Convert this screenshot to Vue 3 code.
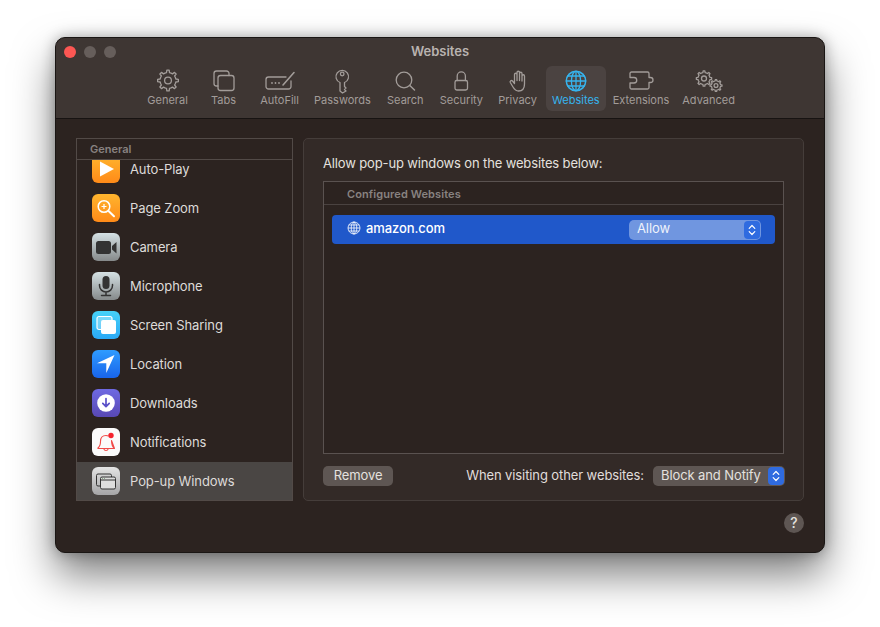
<script setup>
const gear = (cx, cy, ro, ri, teeth) => {
  const pts = [];
  const step = (Math.PI * 2) / teeth;
  for (let i = 0; i < teeth; i++) {
    const a = i * step - Math.PI / 2;
    [[-0.5, ri], [-0.24, ri], [-0.14, ro], [0.14, ro], [0.24, ri]].forEach(([o, r]) => {
      const t = a + o * step;
      pts.push((cx + r * Math.cos(t)).toFixed(2) + " " + (cy + r * Math.sin(t)).toFixed(2));
    });
  }
  return "M" + pts.join("L") + "Z";
};

const tabs = [
  { id: "general", label: "General" },
  { id: "tabs", label: "Tabs" },
  { id: "autofill", label: "AutoFill" },
  { id: "passwords", label: "Passwords" },
  { id: "search", label: "Search" },
  { id: "security", label: "Security" },
  { id: "privacy", label: "Privacy" },
  { id: "websites", label: "Websites", active: true },
  { id: "extensions", label: "Extensions" },
  { id: "advanced", label: "Advanced" },
];

const sites = [
  { id: "autoplay", label: "Auto-Play" },
  { id: "zoom", label: "Page Zoom" },
  { id: "camera", label: "Camera" },
  { id: "mic", label: "Microphone" },
  { id: "screen", label: "Screen Sharing" },
  { id: "location", label: "Location" },
  { id: "downloads", label: "Downloads" },
  { id: "notifications", label: "Notifications" },
  { id: "popup", label: "Pop-up Windows", active: true },
];
</script>

<template>
  <div class="page">
    <div class="window">
      <header class="toolbar">
        <div class="titlebar">
          <div class="lights">
            <span class="light red"></span>
            <span class="light"></span>
            <span class="light"></span>
          </div>
          <div class="title">Websites</div>
          <div></div>
        </div>
        <nav class="tabs">
          <div v-for="t in tabs" :key="t.id" class="tab" :class="{ active: t.active }">
            <svg class="tab-icon" viewBox="0 0 32 26" fill="none" stroke="currentColor" stroke-width="1.3" stroke-linejoin="round" stroke-linecap="round">
              <template v-if="t.id === 'general'">
                <path :d="gear(16, 12.5, 10.4, 8, 8)" />
                <circle cx="16" cy="12.5" r="3.4" />
              </template>
              <template v-else-if="t.id === 'tabs'">
                <path d="M10 18H8.5A2.5 2.5 0 0 1 6 15.500V5.500A2.500 2.500 0 0 1 8.500 3H18.500A2.500 2.500 0 0 1 21 5.500V7.500" />
                <rect x="10" y="7.500" width="16" height="15" rx="2.500" />
              </template>
              <template v-else-if="t.id === 'autofill'">
                <path d="M22 9H4.500A2.500 2.500 0 0 0 2 11.500V18.500A2.500 2.500 0 0 0 4.500 21H24.500A2.500 2.500 0 0 0 27 18.500V13" />
                <path d="M19 17L30 4.500" stroke-width="1.600" />
                <circle cx="8" cy="15" r=".9" fill="currentColor" stroke="none" />
                <circle cx="11.500" cy="15" r=".9" fill="currentColor" stroke="none" />
                <circle cx="15" cy="15" r=".9" fill="currentColor" stroke="none" />
              </template>
              <template v-else-if="t.id === 'passwords'">
                <path d="M14 14.500A6.300 6.300 0 1 1 18.500 14.500V18.500L20 20L18.500 21.500L20 23L16.500 25L14 23Z" />
                <circle cx="16.200" cy="6" r="1.800" />
              </template>
              <template v-else-if="t.id === 'search'">
                <circle cx="15" cy="12" r="7.800" />
                <path d="M20.800 17.500L25.500 22" stroke-width="1.500" />
              </template>
              <template v-else-if="t.id === 'security'">
                <rect x="10" y="12.500" width="12.500" height="9.500" rx="1.800" />
                <path d="M12.200 12.500V8A4.100 4.100 0 0 1 20.400 8V12.500" />
              </template>
              <template v-else-if="t.id === 'privacy'">
                <path d="M12.500 15V6.500A1.200 1.200 0 0 1 15 6.500V12.500M15 12.500V4.500A1.200 1.200 0 0 1 17.500 4.500V12.500M17.500 12.500V5.500A1.200 1.200 0 0 1 20 5.500V13M20 13V8A1.200 1.200 0 0 1 22.500 8V16C22.500 20 20.500 23 16.500 23C13.500 23 12.500 21.500 11 19L8.300 14.500C7.500 13 9.500 11.800 10.500 13L12.500 15.500" />
              </template>
              <template v-else-if="t.id === 'websites'">
                <circle cx="16" cy="13" r="9.700" stroke-width="1.500" />
                <ellipse cx="16" cy="13" rx="4.600" ry="9.700" />
                <path d="M16 3.300V22.700M6.300 13H25.700M7.600 8H24.400M7.600 18H24.400" />
              </template>
              <template v-else-if="t.id === 'extensions'">
                <path d="M5 8V5.500A1.500 1.500 0 0 1 6.500 4H22.500A1.500 1.500 0 0 1 24 5.500V9.500H25.500A2.500 2.500 0 0 1 25.500 14.500H24V19.500A1.500 1.500 0 0 1 22.500 21H6.500A1.500 1.500 0 0 1 5 19.500V15H9A2.500 2.500 0 0 0 9 9.500H5Z" />
              </template>
              <template v-else-if="t.id === 'advanced'">
                <path :d="gear(11, 10.500, 7.700, 6, 8)" />
                <circle cx="11" cy="10.500" r="2.500" />
                <path :d="gear(23, 17.500, 6, 4.600, 8)" />
                <circle cx="23" cy="17.500" r="1.900" />
              </template>
            </svg>
            <span class="tab-label">{{ t.label }}</span>
          </div>
        </nav>
      </header>

      <main class="content">
        <div class="columns">
          <aside class="sidebar">
            <div class="side-head">General</div>
            <ul class="side-list">
              <li v-for="s in sites" :key="s.id" class="side-item" :class="{ active: s.active }">
                <span class="app-icon" :class="'ic-' + s.id">
                  <svg viewBox="0 0 28 28" width="28" height="28">
                    <path v-if="s.id === 'autoplay'" d="M8 6.500V21.500L22 14Z" fill="#fff" />
                    <g v-else-if="s.id === 'zoom'" fill="none" stroke="#fff">
                      <circle cx="12" cy="12.500" r="5.800" stroke-width="1.500" />
                      <path d="M16.500 17L22 22.300" stroke-width="2" stroke-linecap="round" />
                      <path d="M9.500 12.500H14.500M12 10V15" stroke-width="1.200" />
                    </g>
                    <g v-else-if="s.id === 'camera'" fill="#333">
                      <rect x="4" y="8" width="15" height="13" rx="2.500" />
                      <path d="M20 13L24.500 9V20.500L20 16.500Z" />
                    </g>
                    <g v-else-if="s.id === 'mic'">
                      <rect x="10.500" y="4" width="7" height="13" rx="3.500" fill="#333" />
                      <path d="M7.500 12.500V13.500A6.500 6.500 0 0 0 20.500 13.500V12.500M14 20V23.500M9.500 23.500H18.500" fill="none" stroke="#333" stroke-width="1.500" stroke-linecap="round" />
                    </g>
                    <g v-else-if="s.id === 'screen'">
                      <rect x="5" y="5.500" width="15" height="13" rx="2" fill="rgba(255,255,255,.3)" stroke="#fff" stroke-width="1.200" />
                      <rect x="9" y="9" width="15" height="14" rx="2" fill="#fff" />
                    </g>
                    <path v-else-if="s.id === 'location'" d="M22.500 5L5 13.200H14.300V23Z" fill="#fff" />
                    <g v-else-if="s.id === 'downloads'">
                      <circle cx="14" cy="14" r="8.800" fill="#fff" />
                      <path d="M14 9.500V17.500M10.800 14.300L14 17.700L17.200 14.300" fill="none" stroke="#5a50c8" stroke-width="1.700" stroke-linecap="round" stroke-linejoin="round" />
                    </g>
                    <g v-else-if="s.id === 'notifications'">
                      <path d="M5.500 20.500C8 18.500 8.500 16.500 8.500 13.500C8.500 10 10.500 7.500 14 7.500C15 7.500 15.800 7.700 16.500 8M19.500 12.500C19.500 16.500 20 18.500 22.500 20.500ZM5.500 20.500H22.500M11.800 20.800A2.300 2.300 0 0 0 16.200 20.800" fill="none" stroke="#f04a48" stroke-width="1.100" stroke-linejoin="round" />
                      <circle cx="19" cy="7.500" r="2.700" fill="#f5222d" />
                    </g>
                    <g v-else-if="s.id === 'popup'" fill="none" stroke="#333" stroke-width="1">
                      <rect x="4.500" y="7" width="15" height="12" rx="1.500" />
                      <rect x="8.500" y="10" width="15" height="12" rx="1.500" fill="#ddd" />
                      <path d="M8.500 13H23.500" />
                      <path d="M10 11.500H13" stroke="#8a8" stroke-dasharray="1 1" />
                    </g>
                  </svg>
                </span>
                <span class="side-label">{{ s.label }}</span>
              </li>
            </ul>
          </aside>

          <section class="panel">
            <p class="panel-title">Allow pop-up windows on the websites below:</p>
            <div class="table">
              <div class="table-head">Configured Websites</div>
              <div class="row">
                <svg class="row-globe" viewBox="0 0 14 14" width="14" height="14" fill="none" stroke="#fff" stroke-width=".8">
                  <circle cx="7" cy="7" r="6" />
                  <ellipse cx="7" cy="7" rx="2.800" ry="6" />
                  <path d="M7 1V13M1 7H13M1.800 4H12.200M1.800 10H12.200" />
                </svg>
                <span class="row-name">amazon.com</span>
                <div class="select select-row">
                  <span class="select-text">Allow</span>
                  <span class="stepper">
                    <svg viewBox="0 0 10 14" width="10" height="14" fill="none" stroke="#fff" stroke-width="1.200" stroke-linecap="round" stroke-linejoin="round"><path d="M2.200 5.300L5 2.500L7.800 5.300M2.200 8.700L5 11.500L7.800 8.700" /></svg>
                  </span>
                </div>
              </div>
            </div>
            <div class="panel-foot">
              <button class="btn">Remove</button>
              <span class="foot-label">When visiting other websites:</span>
              <div class="select select-foot">
                <span class="select-text">Block and Notify</span>
                <span class="stepper">
                  <svg viewBox="0 0 10 14" width="10" height="14" fill="none" stroke="#fff" stroke-width="1.200" stroke-linecap="round" stroke-linejoin="round"><path d="M2.200 5.300L5 2.500L7.800 5.300M2.200 8.700L5 11.500L7.800 8.700" /></svg>
                </span>
              </div>
            </div>
          </section>
        </div>
        <div class="help-row">
          <span class="help">?</span>
        </div>
      </main>
    </div>
  </div>
</template>

<style scoped>
.page {
  box-sizing: border-box;
  height: 627px;
  padding: 37px 0 0 55px;
  overflow: hidden;
  background: #fff;
}
.window {
  box-sizing: border-box;
  width: 770px;
  height: 516px;
  display: flex;
  flex-direction: column;
  border-radius: 10px;
  overflow: hidden;
  background: #2c2320;
  border: 1px solid #1a1614;
  box-shadow: 0 22px 42px rgba(0, 0, 0, 0.5), 0 0 14px rgba(0, 0, 0, 0.3);
  font-family: Inter, "Liberation Sans", sans-serif;
  font-size: 13px;
  letter-spacing: -0.1px;
  color: #dedbd9;
}
.toolbar {
  box-sizing: border-box;
  height: 81px;
  flex: none;
  background: #3e3633;
  border-bottom: 1px solid #171312;
}
.titlebar {
  display: grid;
  grid-template-columns: 1fr auto 1fr;
  align-items: center;
  height: 27px;
  padding: 0 8px;
}
.lights {
  display: flex;
  gap: 8px;
  padding-top: 1px;
}
.light {
  width: 12px;
  height: 12px;
  border-radius: 50%;
  background: #665e5b;
}
.light.red {
  background: #fc5753;
}
.title {
  font-size: 13px;
  font-weight: 600;
  color: #b9b3b0;
  letter-spacing: 0;
  padding-bottom: 2px;
}
.tabs {
  display: flex;
  justify-content: center;
  padding-left: 1px;
  margin-top: 1px;
}
.tab {
  box-sizing: border-box;
  min-width: 56px;
  height: 45px;
  padding: 2px 6.5px 0;
  display: flex;
  flex-direction: column;
  align-items: center;
  border-radius: 6px;
  color: #a29c99;
}
.tab.active {
  background: #4b4341;
  color: #36b4ee;
}
.tab-icon {
  width: 32px;
  height: 26px;
  flex: none;
}
.tab-label {
  font-size: 11px;
  line-height: 14px;
  margin-top: -1px;
  letter-spacing: 0;
  white-space: nowrap;
}
.content {
  flex: 1;
  min-height: 0;
  display: flex;
  flex-direction: column;
  padding: 19px 20px 0;
}
.columns {
  display: flex;
  gap: 10px;
  height: 363px;
  flex: none;
}
.sidebar {
  box-sizing: border-box;
  width: 217px;
  flex: none;
  display: flex;
  flex-direction: column;
  border: 1px solid #524a47;
}
.side-head {
  box-sizing: border-box;
  height: 21px;
  flex: none;
  padding: 3px 0 0 13px;
  border-bottom: 1px solid #524a47;
  font-size: 11px;
  font-weight: 600;
  letter-spacing: 0;
  color: #888280;
}
.side-list {
  list-style: none;
  margin: 0;
  padding: 0;
  flex: 1;
  min-height: 0;
  overflow: hidden;
  display: flex;
  flex-direction: column;
  justify-content: flex-end;
}
.side-item {
  height: 39px;
  flex: none;
  display: flex;
  align-items: center;
  gap: 10px;
  padding-left: 15px;
}
.side-item.active {
  height: 38px;
  margin-top: 1px;
  background: #4a4644;
}
.app-icon {
  width: 28px;
  height: 28px;
  border-radius: 6px;
  flex: none;
  display: block;
  overflow: hidden;
}
.app-icon svg {
  display: block;
}
.ic-autoplay,
.ic-zoom {
  background: linear-gradient(180deg, #ffb52e, #ff8a18);
}
.ic-camera,
.ic-mic {
  background: linear-gradient(180deg, #d5e1e4, #85898a);
}
.ic-screen {
  background: linear-gradient(180deg, #46d2f8, #2aa9f6);
}
.ic-location {
  background: linear-gradient(180deg, #2f9cff, #1864ea);
}
.ic-downloads {
  background: linear-gradient(180deg, #6e69e2, #5848b4);
}
.ic-notifications {
  background: #fbfafa;
}
.ic-popup {
  background: linear-gradient(180deg, #e4e4e4, #a5a5a7);
}
.side-label {
  font-size: 13px;
  color: #dedbd9;
}
.panel {
  box-sizing: border-box;
  width: 501px;
  flex: none;
  display: flex;
  flex-direction: column;
  padding: 0 19px 14px;
  background: #332a27;
  border: 1px solid #453d3a;
  border-radius: 5px;
}
.panel-title {
  margin: 16px 0 10px;
  height: 16px;
  line-height: 16px;
  font-size: 13px;
  letter-spacing: -0.14px;
  color: #e4e1df;
}
.table {
  flex: 1;
  min-height: 0;
  background: #2c2320;
  border: 1px solid #5a5250;
  width: 461px;
  box-sizing: border-box;
}
.table-head {
  box-sizing: border-box;
  height: 23px;
  line-height: 23px;
  padding: 1px 0 0 23px;
  border-bottom: 1px solid #4a4240;
  font-size: 11px;
  font-weight: 600;
  letter-spacing: 0.1px;
  color: #888280;
}
.row {
  margin: 10px 8px 0;
  height: 29px;
  display: flex;
  align-items: center;
  padding: 0 14px 0 15px;
  background: #2058ca;
  border-radius: 4px;
}
.row-globe {
  flex: none;
  margin-bottom: 3px;
}
.row-name {
  margin-left: 5px;
  margin-bottom: 3px;
  font-weight: 500;
  color: #fff;
}
.select {
  box-sizing: border-box;
  height: 20px;
  display: flex;
  align-items: center;
  justify-content: space-between;
  padding: 0 1px 0 8px;
  border-radius: 5px;
}
.select-row {
  margin-left: auto;
  width: 132px;
  background: #7096e0;
  color: #eef2fb;
}
.select-row .select-text {
  padding-bottom: 3px;
}
.select-foot {
  width: 132px;
  background: #5e5653;
  color: #e4e1df;
}
.select-foot .select-text {
  padding-bottom: 2px;
}
.stepper {
  width: 16px;
  height: 18px;
  border-radius: 4px;
  background: #2f6be0;
  display: flex;
  align-items: center;
  justify-content: center;
}
.panel-foot {
  display: flex;
  align-items: center;
  margin-top: 12px;
  height: 20px;
  width: 462px;
  flex: none;
}
.btn {
  box-sizing: border-box;
  width: 70px;
  height: 20px;
  padding: 0 0 2px;
  border: 0;
  border-radius: 5px;
  background: #5e5653;
  color: #e4e1df;
  font: inherit;
  letter-spacing: inherit;
}
.foot-label {
  margin-left: auto;
  margin-right: 9px;
  padding-bottom: 2px;
  color: #e0dddb;
}
.help-row {
  display: flex;
  justify-content: flex-end;
  margin-top: 12px;
}
.help {
  width: 20px;
  height: 20px;
  border-radius: 50%;
  background: #5e5653;
  color: #e4e1df;
  font-size: 14px;
  font-weight: 500;
  line-height: 20px;
  text-align: center;
}
</style>
